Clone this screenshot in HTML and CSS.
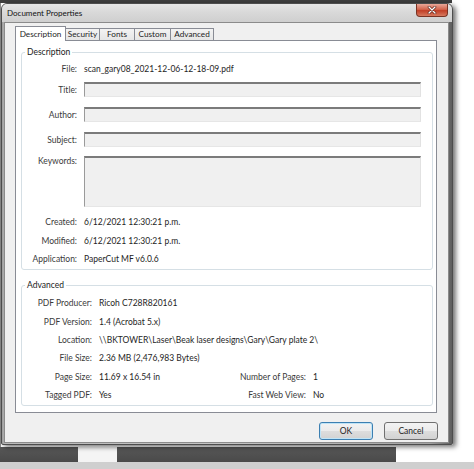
FILE: index.html
```html
<!DOCTYPE html>
<html lang="en">
<head>
<meta charset="utf-8">
<title>Document Properties</title>
<link rel="stylesheet" href="styles.css">
</head>
<body>
<div class="screen">
  <div class="window">
    <div class="titlebar">
      <span class="title">Document Properties</span>
      <div class="close" aria-label="Close">
        <svg width="10" height="8" viewBox="0 0 10 8"><path d="M2 1 L8 7 M8 1 L2 7" stroke="#5a1c12" stroke-width="2.6" stroke-linecap="round"/><path d="M2 1 L8 7 M8 1 L2 7" stroke="#ffffff" stroke-width="1.4" stroke-linecap="round"/></svg>
      </div>
    </div>
    <div class="client">
      <div class="tabs">
        <div class="tab active t-desc">Description</div>
        <div class="tab t-sec">Security</div>
        <div class="tab t-fonts">Fonts</div>
        <div class="tab t-custom">Custom</div>
        <div class="tab t-adv">Advanced</div>
      </div>
      <div class="panel">
        <fieldset class="group desc">
          <legend>Description</legend>
          <div class="row text first"><span class="lbl">File:</span><span class="val">scan_gary08_2021-12-06-12-18-09.pdf</span></div>
          <div class="row g4"><span class="lbl">Title:</span><span class="field"></span></div>
          <div class="row g10"><span class="lbl">Author:</span><span class="field"></span></div>
          <div class="row g10"><span class="lbl">Subject:</span><span class="field"></span></div>
          <div class="row g9 top"><span class="lbl">Keywords:</span><span class="field tall"></span></div>
          <div class="row text g6"><span class="lbl">Created:</span><span class="val">6/12/2021 12:30:21 p.m.</span></div>
          <div class="row text g1"><span class="lbl">Modified:</span><span class="val">6/12/2021 12:30:21 p.m.</span></div>
          <div class="row text"><span class="lbl">Application:</span><span class="val">PaperCut MF v6.0.6</span></div>
        </fieldset>
        <fieldset class="group adv">
          <legend>Advanced</legend>
          <div class="adv-grid">
            <span class="lbl">PDF Producer:</span><span class="val span3">Ricoh C728R820161</span>
            <span class="lbl">PDF Version:</span><span class="val span3">1.4 (Acrobat 5.x)</span>
            <span class="lbl">Location:</span><span class="val span3">\\BKTOWER\Laser\Beak laser designs\Gary\Gary plate 2\</span>
            <span class="lbl">File Size:</span><span class="val span3">2.36 MB (2,476,983 Bytes)</span>
            <span class="lbl">Page Size:</span><span class="val">11.69 x 16.54 in</span>
            <span class="lbl">Number of Pages:</span><span class="val">1</span>
            <span class="lbl">Tagged PDF:</span><span class="val">Yes</span>
            <span class="lbl">Fast Web View:</span><span class="val">No</span>
          </div>
        </fieldset>
      </div>
      <div class="buttons">
        <button class="btn default">OK</button>
        <button class="btn">Cancel</button>
      </div>
    </div>
  </div>
</div>
</body>
</html>
```

FILE: styles.css
```css
html, body {
  margin: 0;
  padding: 0;
}

body {
  font-family: Lato, "Open Sans", "Noto Sans", sans-serif;
  font-size: 8.5px;
  color: #1e1e1e;
}

.screen {
  width: 474px;
  height: 469px;
  box-sizing: border-box;
  padding: 3px 0 0 1px;
  overflow: hidden;
  background:
    linear-gradient(#3e3e3e, #3e3e3e) 0 0 / 452px 3px no-repeat,
    linear-gradient(#575757, #4a4a4a) 0 447px / 78px 15px no-repeat,
    linear-gradient(#575757, #4a4a4a) 117px 447px / 279px 15px no-repeat,
    linear-gradient(#f4f4f4, #f4f4f4) 78px 447px / 39px 15px no-repeat,
    linear-gradient(#cfcfcf, #cfcfcf) 0 462px / 474px 7px no-repeat,
    linear-gradient(to right, #8a8a8a, #8a8a8a) 0 0 / 1px 469px no-repeat,
    #ffffff;
}

.window {
  width: 452px;
  height: 442px;
  box-sizing: border-box;
  border: 1px solid #4d4d4d;
  border-radius: 6px 6px 2px 2px;
  display: flex;
  flex-direction: column;
  background: linear-gradient(to right, #9c9c9c 0, #b9b9b9 3px, #c4c4c4 50%, #a2a2a2 95%, #5e5e5e 100%);
  box-shadow: 3px 2px 5px rgba(0, 0, 0, 0.55);
}

.titlebar {
  height: 18px;
  display: flex;
  align-items: center;
  padding-left: 5px;
  border-radius: 5px 5px 0 0;
  background: linear-gradient(to bottom, #e6e6e6 0, #dadada 40%, #cfcfcf 100%);
  background-color: #d8d8d8;
}

.title {
  font-size: 8px;
  color: #111;
}

.close {
  margin-left: auto;
  margin-right: 4px;
  align-self: flex-start;
  width: 32px;
  height: 13px;
  box-sizing: border-box;
  border: 1px solid #7a3324;
  border-top: none;
  border-radius: 0 0 4px 4px;
  background: linear-gradient(to bottom, #e9a899 0, #d4654d 45%, #c23f27 55%, #d77a5f 100%);
  display: flex;
  align-items: center;
  justify-content: center;
}

.client {
  flex: 1;
  margin: 0 3px 1px 2px;
  border: 1px solid #8b8b8b;
  background: #f0f0f0;
  padding: 3px 0 0 10px;
  display: flex;
  flex-direction: column;
}

.tabs {
  display: flex;
  align-items: flex-end;
  height: 14px;
  position: relative;
  z-index: 1;
}

.tab {
  height: 12px;
  box-sizing: border-box;
  border: 1px solid #898c95;
  border-bottom: none;
  border-left: none;
  padding: 0;
  text-align: center;
  font-size: 8.2px;
  line-height: 11px;
  background: linear-gradient(to bottom, #f3f3f3, #e6e6e6);
  color: #1e1e1e;
  white-space: nowrap;
  overflow: hidden;
}

.tab.active {
  height: 15px;
  margin-bottom: -1px;
  border-left: 1px solid #898c95;
  background: #ffffff;
  line-height: 14px;
}

.t-desc { width: 51px; }
.t-sec { width: 34px; }
.t-fonts { width: 35px; }
.t-custom { width: 36px; }
.t-adv { width: 43px; }

.panel {
  width: 422px;
  height: 373px;
  box-sizing: border-box;
  border: 1px solid #898c95;
  background: #ffffff;
  padding: 4px 0 0 5px;
}

.group {
  width: 412px;
  box-sizing: border-box;
  margin: 0;
  padding: 0 0 1px 0;
  border: 1px solid #d5dfe5;
  border-radius: 3px;
  min-inline-size: 0;
}

.group legend {
  margin-left: 3px;
  padding: 0 2px;
  line-height: 14px;
  color: #222;
}

.group.adv {
  margin-top: 8px;
}

.row {
  display: flex;
  align-items: center;
}

.row.text {
  height: 18px;
}

.row.first { margin-top: 1px; }
.row.g4 { margin-top: 4px; }
.row.g10 { margin-top: 10px; }
.row.g9 { margin-top: 9px; }
.row.g6 { margin-top: 6px; }
.row.g1 { margin-top: 1px; }

.row.top {
  align-items: flex-start;
}

.row.top .lbl {
  line-height: 12px;
  margin-top: -1px;
}

.lbl {
  color: #3a3a3a;
  text-align: right;
  white-space: nowrap;
}

.desc .lbl {
  flex: none;
  width: 55px;
  margin-right: 7px;
}

.val {
  color: #1e1e1e;
  white-space: nowrap;
}

.field {
  display: block;
  width: 337px;
  height: 15px;
  box-sizing: border-box;
  background: #f0f0f0;
  border: 1px solid;
  border-color: #7b7b7b #e2e2e2 #e6e6e6 #9a9a9a;
  border-top-width: 2px;
}

.field.tall {
  height: 51px;
}

.adv-grid {
  display: grid;
  grid-template-columns: 70px 131px 69px 1fr;
  column-gap: 7px;
  grid-auto-rows: 18.4px;
  align-items: center;
  padding-top: 2px;
}

.span3 {
  grid-column: span 3;
}

.buttons {
  display: flex;
  justify-content: flex-end;
  gap: 11px;
  margin-top: 9px;
  padding-right: 10px;
}

.btn {
  width: 54px;
  height: 18px;
  box-sizing: border-box;
  padding: 0;
  font: inherit;
  color: #1e1e1e;
  border: 1px solid #707070;
  border-radius: 3px;
  background: linear-gradient(to bottom, #f3f3f3 0, #ebebeb 50%, #dddddd 51%, #d2d2d2 100%);
}

.btn.default {
  border-color: #3c7fb1;
  box-shadow: inset 0 0 0 1px #bfe4f7;
}
```
